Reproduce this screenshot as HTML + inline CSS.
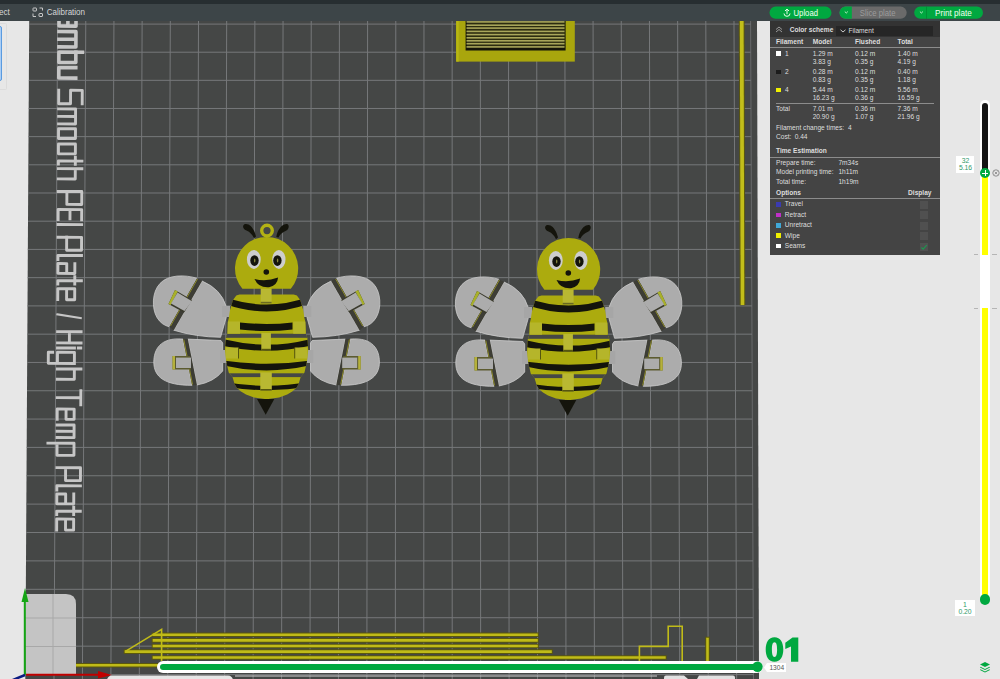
<!DOCTYPE html>
<html><head><meta charset="utf-8">
<style>
*{margin:0;padding:0;box-sizing:border-box}
html,body{width:1000px;height:679px;overflow:hidden;background:#e7e7e7;font-family:"Liberation Sans",sans-serif}
.abs{position:absolute}
#topstrip{left:0;top:0;width:1000px;height:4px;background:#272e31}
#topbar{left:0;top:4px;width:1000px;height:17px;background:#3d4548}
#leftpanel{left:0;top:21px;width:30px;height:658px;background:#e7e7e7}
svg.full{position:absolute;left:0;top:0;width:1000px;height:679px}
.tb{color:#d8d8d8;font-size:9px;top:6px;white-space:nowrap}
.btn{position:absolute;top:7px;height:12px;border-radius:6px;background:#00a840;color:#fff;font-size:8px;line-height:12px;text-align:center}
#legend{left:770px;top:21px;width:170px;height:234px;background:#444444;color:#dedede;font-size:6.6px}
#legend .hdr{position:absolute;left:0;top:0;width:170px;height:16px;background:#333333}
.lt{position:absolute;white-space:nowrap;line-height:8px}
.b{font-weight:bold}
</style></head><body>
<div id="topstrip" class="abs"></div>
<div id="topbar" class="abs"></div>
<svg class="abs" style="left:0;top:0" width="100" height="21" viewBox="0 0 100 21"><g fill="#d6d8d8" font-family="Liberation Sans" font-size="8.8">
<text x="-1" y="14.9" textLength="10.9" lengthAdjust="spacingAndGlyphs">ect</text>
<text x="46.8" y="14.9" textLength="38.2" lengthAdjust="spacingAndGlyphs">Calibration</text></g></svg>
<div id="leftpanel" class="abs"></div>
<svg class="full" viewBox="0 0 1000 679">
  <polygon points="29.2,21 757,21 759,679 25.3,679" fill="#454746"/>
  <g stroke="#76787a" stroke-width="1" fill="none">
  <line x1="57.58" y1="21" x2="53.98" y2="679"/>
<line x1="85.77" y1="21" x2="82.42" y2="679"/>
<line x1="113.95" y1="21" x2="110.87" y2="679"/>
<line x1="142.13" y1="21" x2="139.31" y2="679"/>
<line x1="170.32" y1="21" x2="167.76" y2="679"/>
<line x1="198.50" y1="21" x2="196.20" y2="679"/>
<line x1="226.68" y1="21" x2="224.65" y2="679"/>
<line x1="254.87" y1="21" x2="253.09" y2="679"/>
<line x1="283.05" y1="21" x2="281.54" y2="679"/>
<line x1="311.24" y1="21" x2="309.98" y2="679"/>
<line x1="339.42" y1="21" x2="338.43" y2="679"/>
<line x1="367.60" y1="21" x2="366.87" y2="679"/>
<line x1="395.79" y1="21" x2="395.32" y2="679"/>
<line x1="423.97" y1="21" x2="423.76" y2="679"/>
<line x1="452.15" y1="21" x2="452.21" y2="679"/>
<line x1="480.34" y1="21" x2="480.65" y2="679"/>
<line x1="508.52" y1="21" x2="509.10" y2="679"/>
<line x1="536.71" y1="21" x2="537.55" y2="679"/>
<line x1="564.89" y1="21" x2="565.99" y2="679"/>
<line x1="593.07" y1="21" x2="594.44" y2="679"/>
<line x1="621.26" y1="21" x2="622.88" y2="679"/>
<line x1="649.44" y1="21" x2="651.33" y2="679"/>
<line x1="677.63" y1="21" x2="679.77" y2="679"/>
<line x1="705.81" y1="21" x2="708.22" y2="679"/>
<line x1="733.99" y1="21" x2="736.66" y2="679"/>
<line x1="29.18" y1="24.10" x2="750.61" y2="24.10"/>
<line x1="29.02" y1="52.21" x2="750.74" y2="52.21"/>
<line x1="28.85" y1="80.33" x2="750.86" y2="80.33"/>
<line x1="28.68" y1="108.47" x2="750.99" y2="108.47"/>
<line x1="28.51" y1="136.63" x2="751.11" y2="136.63"/>
<line x1="28.35" y1="164.80" x2="751.23" y2="164.80"/>
<line x1="28.18" y1="192.99" x2="751.36" y2="192.99"/>
<line x1="28.01" y1="221.19" x2="751.48" y2="221.19"/>
<line x1="27.85" y1="249.41" x2="751.61" y2="249.41"/>
<line x1="27.68" y1="277.65" x2="751.73" y2="277.65"/>
<line x1="27.51" y1="305.90" x2="751.86" y2="305.90"/>
<line x1="27.34" y1="334.17" x2="751.98" y2="334.17"/>
<line x1="27.18" y1="362.45" x2="752.10" y2="362.45"/>
<line x1="27.01" y1="390.75" x2="752.23" y2="390.75"/>
<line x1="26.84" y1="419.07" x2="752.35" y2="419.07"/>
<line x1="26.67" y1="447.40" x2="752.48" y2="447.40"/>
<line x1="26.50" y1="475.75" x2="752.60" y2="475.75"/>
<line x1="26.34" y1="504.11" x2="752.73" y2="504.11"/>
<line x1="26.17" y1="532.49" x2="752.85" y2="532.49"/>
<line x1="26.00" y1="560.89" x2="752.98" y2="560.89"/>
<line x1="25.83" y1="589.30" x2="753.10" y2="589.30"/>
<line x1="25.66" y1="617.73" x2="753.23" y2="617.73"/>
<line x1="25.49" y1="646.17" x2="753.36" y2="646.17"/>
<line x1="25.33" y1="674.63" x2="753.48" y2="674.63"/>
<line x1="750.6" y1="21" x2="753.5" y2="679" stroke-opacity="0.7"/>
  </g>
</svg>
<svg class="full" viewBox="0 0 1000 679">
  <!-- plate text -->
  <defs><clipPath id="plateclip"><rect x="0" y="21" width="1000" height="658"/></clipPath></defs>
  <g clip-path="url(#plateclip)"><g transform="translate(57.8,0) rotate(90.27)" fill="none" stroke="#c6c6c6" stroke-linejoin="round" stroke-linecap="square">
<path d="M103.75,-24.90 L90.25,-24.90 L90.25,-13.20 L103.75,-13.20 L103.75,-1.35 L90.25,-1.35 M108.85,-1.35 L108.85,-18.30 L123.85,-18.30 L123.85,-1.35 M116.35,-18.30 L116.35,-1.35 M128.65,-1.35 L128.65,-18.30 L138.45,-18.30 L138.45,-1.35 L128.65,-1.35Z M143.95,-1.35 L143.95,-18.30 L153.75,-18.30 L153.75,-1.35 L143.95,-1.35Z M161.00,-24.90 L161.00,-1.35 L164.15,-1.35 M157.10,-18.30 L164.15,-18.30 M168.65,-24.90 L168.65,-1.35 M168.65,-18.30 L178.85,-18.30 L178.85,-1.35 M191.45,-1.35 L191.45,-24.90 L204.35,-24.90 L204.35,-10.00 L191.45,-10.00 M219.65,-24.90 L209.55,-24.90 L209.55,-1.35 L219.65,-1.35 M209.55,-13.20 L218.65,-13.20 M224.55,-24.90 L224.55,-1.35 M237.25,-1.35 L237.25,-24.90 L250.15,-24.90 L250.15,-10.00 L237.25,-10.00 M255.35,-24.90 L255.35,-1.35 L259.55,-1.35 M263.55,-18.30 L273.35,-18.30 L273.35,-1.35 L263.55,-1.35 L263.55,-10.20 L273.35,-10.20 M280.70,-24.90 L280.70,-1.35 L284.05,-1.35 M276.60,-18.30 L284.05,-18.30 M299.65,-1.35 L288.65,-1.35 L288.65,-18.30 L299.65,-18.30 L299.65,-10.20 L288.65,-10.20 M331.65,-24.90 L331.65,-1.35 M342.85,-24.90 L342.85,-1.35 M331.65,-13.20 L342.85,-13.20 M347.95,-18.30 L347.95,-1.35 M347.95,-22.20 L347.95,-24.60 M363.35,-18.30 L352.25,-18.30 L352.25,-1.35 L363.35,-1.35 M363.35,-18.30 L363.35,7.80 L352.25,7.80 L352.25,3.50 M368.95,-24.90 L368.95,-1.35 M368.95,-18.30 L379.25,-18.30 L379.25,-1.35 M390.60,-24.90 L404.70,-24.90 M397.65,-24.90 L397.65,-1.35 M419.25,-1.35 L409.05,-1.35 L409.05,-18.30 L419.25,-18.30 L419.25,-10.20 L409.05,-10.20 M424.95,-1.35 L424.95,-18.30 L437.55,-18.30 L437.55,-1.35 M431.25,-18.30 L431.25,-1.35 M443.15,7.80 L443.15,-18.30 L455.25,-18.30 L455.25,-1.35 L443.15,-1.35 M467.65,-1.35 L467.65,-24.90 L480.55,-24.90 L480.55,-10.00 L467.65,-10.00 M485.75,-24.90 L485.75,-1.35 L489.95,-1.35 M493.95,-18.30 L503.75,-18.30 L503.75,-1.35 L493.95,-1.35 L493.95,-10.20 L503.75,-10.20 M511.10,-24.90 L511.10,-1.35 L514.45,-1.35 M507.00,-18.30 L514.45,-18.30 M530.05,-1.35 L519.05,-1.35 L519.05,-18.30 L530.05,-18.30 L530.05,-10.20 L519.05,-10.20" stroke-width="2.9"/>
<path d="M14.35,-18.30 L26.05,-18.30 L26.05,-1.35 L14.35,-1.35 L14.35,-10.20 L26.05,-10.20 M31.55,-1.35 L31.55,-18.30 L46.85,-18.30 L46.85,-1.35 M39.20,-18.30 L39.20,-1.35 M52.05,-24.90 L52.05,-1.35 L62.45,-1.35 L62.45,-18.30 L52.05,-18.30 M67.55,-18.30 L67.55,-1.35 L78.05,-1.35 L78.05,-18.30" stroke-width="3.6"/>
<path d="M314.3,-1 L318,-24.5" stroke-width="2"/>
</g></g>
  <defs>
<clipPath id="bodyclip"><path d="M239.5,294.5 L236.3,295.5 L233.0,300.0 L230.0,310.0 L228.8,318.0 L227.8,322.0 L227.3,334.0 L225.8,338.0 L225.0,350.0 L226.0,360.0 L228.7,372.4 L232.5,377.1 L234.6,384.0 L237.0,388.0 L241.0,391.5 L246.0,394.5 L254.0,397.5 L266.6,399.2 L279.2,397.5 L287.2,394.5 L292.2,391.5 L296.2,388.0 L298.6,384.0 L300.7,377.1 L304.5,372.4 L307.2,360.0 L308.2,350.0 L307.4,338.0 L305.9,334.0 L305.4,322.0 L304.4,318.0 L303.2,310.0 L300.2,300.0 L296.9,295.5 L293.7,294.5 Z"/></clipPath>
<g id="wingL">
  <path stroke="#cbcbcb" stroke-width="0.8" d="M197,278.3 C185,274.5 168,274.5 160,283.5 C152,292 151.5,308 157,317.5 C160,322.5 164,325.5 169.3,326.8 Z" fill="#acacac"/>
  <path stroke="#cbcbcb" stroke-width="0.8" d="M202,281 Q221,289 226.2,306.4 L226.2,317.5 L220.6,337.3 Q196,337 173.7,330.2 Z" fill="#acacac"/>
  <path d="M197,278.3 L169.3,326.8 L173.7,330.2 L202,281 Z" fill="#3d3d35"/>
  <path d="M197.5,279 L170.5,326" stroke="#8c8a2a" stroke-width="1" fill="none"/>
  <path d="M175,290 L192,300 L184,312.5 L168.5,304 Z" fill="#3a3a2c"/>
  <path d="M175,290 L177.8,291.6 L170.6,305 L168.5,304 Z" fill="#a8b02a"/>
  <path d="M177.5,292.6 L192,301.2 L184.5,311 L171,303.5 Z" fill="#acacac"/>
  <path stroke="#cbcbcb" stroke-width="0.8" d="M183,339.1 C160,337 153.8,350 153.8,362 C153.8,377 165,385.5 192.1,385.3 Z" fill="#acacac"/>
  <path stroke="#cbcbcb" stroke-width="0.8" d="M187.8,339.1 L221,340.5 L222.7,343 L222.7,371 Q214,382 196.9,385 Z" fill="#acacac"/>
  <path d="M183,339.1 L192.1,385.3 L196.9,385 L187.8,339.1 Z" fill="#3d3d35"/>
  <path d="M183.8,339.5 L192.5,384.5" stroke="#8c8a2a" stroke-width="1" fill="none"/>
  <path d="M190,356 L172.5,356 L172.5,369.5 L191,369.5 Z" fill="#5c5b30"/><path d="M172.5,356 L175,356 L175,369.5 L172.5,369.5 Z" fill="#b5b13a"/>
  <path d="M191,357.6 L176,357.6 L176,368 L191,368 Z" fill="#acacac"/>
  <rect x="222" y="306" width="8" height="11" fill="#a6a6a6"/>
  <rect x="220" y="350" width="8" height="13" fill="#a6a6a6"/>
</g>
<g id="bee">
  <use href="#wingL"/>
  <use href="#wingL" transform="translate(533.2,0) scale(-1,1)"/>
  <!-- body -->
  <g clip-path="url(#bodyclip)">
    <rect x="220" y="290" width="95" height="112" fill="#acab0e"/>
    <path d="M225,297 Q266.6,312.2 308.2,297 L308.2,304.1 Q266.6,318.9 225,304.1 Z" fill="#14140c"/>
    <path d="M240,322.4 Q266.6,325.4 292.5,322.4 L292.5,329.5 Q266.6,332.5 240,329.5 Z" fill="#14140c"/>
    <path d="M220,338.3 Q266.6,350.9 313.2,338.3 L313.2,345.1 Q266.6,356.4 220,345.1 Z" fill="#14140c"/>
    <path d="M220,360 Q266.6,367.4 313.2,360 L313.2,364.6 Q266.6,376.2 220,364.6 Z" fill="#14140c"/>
    <path d="M220,380.9 Q266.6,390.7 313.2,380.9 L313.2,385.5 Q266.6,394.8 220,385.5 Z" fill="#14140c"/>
    <rect x="220" y="333.7" width="95" height="4.1" fill="#454746"/>
    <rect x="220" y="373.3" width="95" height="3.8" fill="#454746"/>
    <rect x="261.3" y="333" width="9.6" height="17.3" fill="#b9b832"/>
    <rect x="261.3" y="348.8" width="9.6" height="1.5" fill="#55550e"/>
    <rect x="260.3" y="372.4" width="11.5" height="18.2" fill="#b9b832"/>
    <rect x="260.3" y="389" width="11.5" height="1.6" fill="#55550e"/>
    <rect x="227.5" y="321.5" width="12.5" height="12.2" fill="#b5b52a"/>
    <rect x="293.2" y="321.5" width="12.5" height="12.2" fill="#b5b52a"/>
    <rect x="225.8" y="347.5" width="12.5" height="11" fill="#b5b52a"/>
    <rect x="294.9" y="347.5" width="12.5" height="11" fill="#b5b52a"/>
    <rect x="238" y="347.5" width="1" height="11" fill="#55550e"/>
    <rect x="294.2" y="347.5" width="1" height="11" fill="#55550e"/>
  </g>
  <path d="M257,399 L274.3,399 L265.7,414.8 Z" fill="#14140c"/>
  <!-- neck -->
  <rect x="260.7" y="286" width="10.9" height="17.4" fill="#b9b832"/><rect x="260.7" y="301.8" width="10.9" height="1.6" fill="#6a6a20"/>
  <!-- head -->
  <path d="M242.4,288.8 A31.6 31.6 0 1 1 290.8,288.8 Z" fill="#acab0e"/>
  <path d="M243.1,226.1 C243.5,223.5 246.5,223.6 248.5,224.5 C251.5,226 254.5,230 256,236.5 L254,238.3 C252.5,235 250,232 246.5,230.6 C244,229.6 242.8,228 243.1,226.1 Z" fill="#14140c"/>
  <path d="M288.7,226.1 C288.5,223.5 286,223.5 284,224.5 C281,226 277.5,230 276.3,237 L278.5,237.5 C280,234.5 282.5,232 286,230.8 C288,230 288.8,228 288.7,226.1 Z" fill="#14140c"/>
  <ellipse cx="253.8" cy="259.4" rx="6.9" ry="9.5" fill="#cdcdcd"/>
  <ellipse cx="278.9" cy="259.4" rx="6.6" ry="9.5" fill="#cdcdcd"/>
  <ellipse cx="254.5" cy="260.6" rx="4.2" ry="5.3" fill="#14140c"/><ellipse cx="254.7" cy="260.6" rx="0.7" ry="2" fill="#8a8a40"/>
  <ellipse cx="277.4" cy="260.6" rx="4.2" ry="5.3" fill="#14140c"/><ellipse cx="277.6" cy="260.6" rx="0.7" ry="2" fill="#8a8a40"/>
  <circle cx="266.3" cy="272" r="2.8" fill="#14140c"/>
  <path d="M254.5,278.9 Q266,282 278.1,277.5 Q277.5,285.5 269,287.2 Q258.5,288 254.5,278.9 Z" fill="#14140c"/>
</g>
</defs>

  <use href="#bee"/>
  <circle cx="267" cy="230.6" r="5.3" stroke="#b3b214" stroke-width="3.4" fill="none"/>
  <use href="#bee" transform="translate(302,1)"/>
  <!-- top object -->
  <rect x="456.2" y="21" width="118.6" height="40.6" fill="#a9a60d"/><rect x="456.2" y="21" width="2.5" height="40.6" fill="#b8b712"/>
  <rect x="465.6" y="21" width="100" height="29.5" fill="#15150a"/><rect x="467" y="21" width="98" height="26.5" fill="#2c2c10"/>
  <rect x="466.5" y="21.1" width="98" height="1.6" fill="#a8a65a"/>
<rect x="466.5" y="24.4" width="98" height="1.6" fill="#a8a65a"/>
<rect x="466.5" y="27.3" width="98" height="1.6" fill="#a8a65a"/>
<rect x="466.5" y="30.6" width="98" height="1.6" fill="#a8a65a"/>
<rect x="466.5" y="33.8" width="98" height="1.6" fill="#a8a65a"/>
<rect x="466.5" y="37.0" width="98" height="1.6" fill="#a8a65a"/>
<rect x="466.5" y="40.0" width="98" height="1.6" fill="#a8a65a"/>
<rect x="466.5" y="42.9" width="98" height="1.6" fill="#a8a65a"/>
<rect x="466.5" y="46.1" width="98" height="1.6" fill="#a8a65a"/>
  <!-- right yellow line -->
  <polygon points="738.8,21 744.6,21 745.3,305.3 739.7,305.3" fill="#5a570e"/><polygon points="739.8,21 743.6,21 744.3,305 740.7,305" fill="#c2be1a"/>
  <!-- bottom lines -->
  <g stroke="#5a570e" stroke-width="4.6" fill="none" stroke-linecap="square">
    <line x1="154" y1="634.8" x2="536.5" y2="634.8"/>
    <line x1="154" y1="640.4" x2="536.5" y2="640.4"/>
    <line x1="154" y1="646" x2="536.5" y2="646"/>
    <line x1="126" y1="651.6" x2="550.5" y2="651.6"/>
    <line x1="154" y1="657.5" x2="664.4" y2="657.5"/>
    <line x1="77" y1="665.2" x2="160" y2="665.2"/>
    <line x1="707.5" y1="639" x2="707.5" y2="661"/>
  </g>
  <g stroke="#c0bb18" stroke-width="2.6" fill="none" stroke-linecap="square">
    <line x1="154" y1="634.8" x2="536.5" y2="634.8"/>
    <line x1="154" y1="640.4" x2="536.5" y2="640.4"/>
    <line x1="154" y1="646" x2="536.5" y2="646"/>
    <line x1="126" y1="651.6" x2="550.5" y2="651.6"/>
    <line x1="154" y1="657.5" x2="664.4" y2="657.5"/>
    <line x1="77" y1="665.2" x2="160" y2="665.2"/>
    <line x1="707.5" y1="639" x2="707.5" y2="661"/>
  </g>
  <g stroke="#c0bb18" stroke-width="1.6" fill="none">
    <polyline points="125,651.6 161.6,629.4 161.6,661"/>
    <polyline points="639.4,661 639.4,646.4 668.2,646.4 668.2,626.2 682.2,626.2 682.2,661"/>
  </g>
  <!-- cube -->
  <path d="M26,594 L66,594 Q76,594 76,604 L76,675 L26,675 Z" fill="#c4c4c4"/>
  <g stroke="#a8a8a8" stroke-width="1"><line x1="53" y1="594" x2="53" y2="675"/><line x1="26" y1="618" x2="76" y2="618"/><line x1="26" y1="646.5" x2="76" y2="646.5"/></g>
  <!-- axes -->
  <line x1="24.8" y1="675" x2="24.8" y2="598" stroke="#14a614" stroke-width="2"/>
  <polygon points="21.5,602 28.5,602 25,588" fill="#14a614"/>
  <line x1="26" y1="674.8" x2="100" y2="674.8" stroke="#c00000" stroke-width="2"/>
  <polygon points="98,671 98,678.5 112,675" fill="#c00000"/>
  <line x1="25" y1="675" x2="8" y2="682" stroke="#0b1a80" stroke-width="2.5"/>
  <!-- bottom light bar -->
  <rect x="107" y="675.5" width="126" height="10" rx="5" fill="#e6e6e6"/>
  <line x1="235" y1="676" x2="657" y2="676" stroke="#cfcfcf" stroke-width="1"/>
  <path d="M664,679 L664,677.5 Q664,675.5 666,675.5 L684,675.5 L688,679 Z" fill="#e2e2e2"/>
  <path d="M697,679 L699,675.5 L733,675.5 Q735,675.5 735,677.5 L735,679 Z" fill="#e2e2e2"/>
  <!-- horizontal slider -->
  <rect x="157" y="661" width="606" height="12" rx="6" fill="#ffffff"/>
  <rect x="160" y="664" width="598" height="6" rx="3" fill="#00a840"/>
  <circle cx="757.5" cy="666.8" r="5.2" fill="#00a840"/>
  <path fill-rule="evenodd" d="M774.5,637.2 C780.5,637.2 783.3,642.5 783.3,649.5 C783.3,656.5 780.5,661.8 774.5,661.8 C768.5,661.8 765.7,656.5 765.7,649.5 C765.7,642.5 768.5,637.2 774.5,637.2 Z M774.5,642.2 C772.6,642.2 771.9,645 771.9,649.5 C771.9,654 772.6,656.9 774.5,656.9 C776.4,656.9 777.1,654 777.1,649.5 C777.1,645 776.4,642.2 774.5,642.2 Z" fill="#00a840"/>
  <path d="M798.3,637.5 L798.3,661.8 L791,661.8 L791,646.5 L785.3,649 L785.3,642.8 L792.5,637.5 Z" fill="#00a840"/>
</svg>
<!-- top buttons -->
<svg class="abs" style="left:760px;top:0" width="240" height="21" viewBox="760 0 240 21">
 <rect x="769.5" y="6.6" width="62" height="12.2" rx="6.1" fill="#00a840"/>
 <g stroke="#e8ffe8" stroke-width="1" fill="none"><path d="M787,9.2 L787,14.2 M785,11 L787,9 L789,11 M784,13.5 Q784,16.3 787,16.3 Q790,16.3 790,13.5"/></g>
 <text x="793.5" y="15.9" fill="#f2fff2" font-family="Liberation Sans" font-size="8.6" textLength="24.5" lengthAdjust="spacingAndGlyphs">Upload</text>
 <rect x="839.5" y="6.6" width="67.2" height="12.2" rx="6.1" fill="#6a6a6a"/>
 <path d="M851.8,6.6 L845.6,6.6 A6.1 6.1 0 0 0 845.6,18.8 L851.8,18.8 Z" fill="#00a840"/>
 <path d="M844.8,11.6 L846.3,13 L847.8,11.6" stroke="#e8ffe8" stroke-width="0.8" fill="none"/>
 <text x="859.8" y="15.9" fill="#9c9c9c" font-family="Liberation Sans" font-size="8.6" textLength="35.7" lengthAdjust="spacingAndGlyphs">Slice plate</text>
 <rect x="914.2" y="6.6" width="68.8" height="12.2" rx="6.1" fill="#00a840"/>
 <line x1="926.5" y1="6.6" x2="926.5" y2="18.8" stroke="#008a34" stroke-width="0.8"/>
 <path d="M919.9,11.6 L921.4,13 L922.9,11.6" stroke="#e8ffe8" stroke-width="0.8" fill="none"/>
 <text x="935" y="15.9" fill="#f2fff2" font-family="Liberation Sans" font-size="8.6" textLength="36.8" lengthAdjust="spacingAndGlyphs">Print plate</text>
</svg>
<!-- legend -->
<div id="legend" class="abs">
<div class="hdr"></div>
<svg class="abs" style="left:5px;top:5px" width="8" height="7" viewBox="0 0 8 7"><path d="M1,6 L4,3.5 L7,6 M1,3.5 L4,1 L7,3.5" stroke="#9a9a9a" stroke-width="1" fill="none"/></svg>
<div class="lt b" style="left:19.7px;top:4.6px;">Color scheme</div>
<div class="abs" style="left:66px;top:5px;width:96.7px;height:9.5px;background:#262626"></div>
<svg class="abs" style="left:70px;top:8px" width="6" height="4" viewBox="0 0 6 4"><path d="M0.5,0.8 L3,3 L5.5,0.8" stroke="#dddddd" stroke-width="0.9" fill="none"/></svg>
<div class="lt " style="left:78.5px;top:5.5px;">Filament</div>
<div class="lt b" style="left:6px;top:17.2px;">Filament</div>
<div class="lt b" style="left:42.7px;top:17.2px;">Model</div>
<div class="lt b" style="left:85px;top:17.2px;">Flushed</div>
<div class="lt b" style="left:127.6px;top:17.2px;">Total</div>
<div class="abs" style="left:0;top:26px;width:170px;height:1px;background:#8c8c8c"></div>
<div class="abs" style="left:6.3px;top:30.4px;width:4.5px;height:4.5px;background:#ffffff"></div>
<div class="lt " style="left:15px;top:28.9px;">1</div>
<div class="lt " style="left:42.7px;top:28.9px;">1.29 m</div>
<div class="lt " style="left:42.7px;top:36.7px;">3.83 g</div>
<div class="lt " style="left:85px;top:28.9px;">0.12 m</div>
<div class="lt " style="left:85px;top:36.7px;">0.35 g</div>
<div class="lt " style="left:127.6px;top:28.9px;">1.40 m</div>
<div class="lt " style="left:127.6px;top:36.7px;">4.19 g</div>
<div class="abs" style="left:6.3px;top:48.6px;width:4.5px;height:4.5px;background:#1c1c1c"></div>
<div class="lt " style="left:15px;top:47.1px;">2</div>
<div class="lt " style="left:42.7px;top:47.1px;">0.28 m</div>
<div class="lt " style="left:42.7px;top:54.9px;">0.83 g</div>
<div class="lt " style="left:85px;top:47.1px;">0.12 m</div>
<div class="lt " style="left:85px;top:54.9px;">0.35 g</div>
<div class="lt " style="left:127.6px;top:47.1px;">0.40 m</div>
<div class="lt " style="left:127.6px;top:54.9px;">1.18 g</div>
<div class="abs" style="left:6.3px;top:66.8px;width:4.5px;height:4.5px;background:#f0f000"></div>
<div class="lt " style="left:15px;top:65.3px;">4</div>
<div class="lt " style="left:42.7px;top:65.3px;">5.44 m</div>
<div class="lt " style="left:42.7px;top:73.1px;">16.23 g</div>
<div class="lt " style="left:85px;top:65.3px;">0.12 m</div>
<div class="lt " style="left:85px;top:73.1px;">0.36 g</div>
<div class="lt " style="left:127.6px;top:65.3px;">5.56 m</div>
<div class="lt " style="left:127.6px;top:73.1px;">16.59 g</div>
<div class="abs" style="left:6px;top:81.8px;width:158px;height:1px;background:#8c8c8c"></div>
<div class="lt " style="left:6px;top:84.2px;">Total</div>
<div class="lt " style="left:42.7px;top:84.2px;">7.01 m</div>
<div class="lt " style="left:42.7px;top:91.8px;">20.90 g</div>
<div class="lt " style="left:85px;top:84.2px;">0.36 m</div>
<div class="lt " style="left:85px;top:91.8px;">1.07 g</div>
<div class="lt " style="left:127.6px;top:84.2px;">7.36 m</div>
<div class="lt " style="left:127.6px;top:91.8px;">21.96 g</div>
<div class="lt " style="left:6px;top:102.8px;">Filament change times:</div>
<div class="lt " style="left:78px;top:102.8px;">4</div>
<div class="lt " style="left:6px;top:111.8px;">Cost:</div>
<div class="lt " style="left:24.7px;top:111.8px;">0.44</div>
<div class="lt b" style="left:6px;top:126.4px;">Time Estimation</div>
<div class="abs" style="left:0;top:135.8px;width:170px;height:1px;background:#8c8c8c"></div>
<div class="lt " style="left:6px;top:137.5px;">Prepare time:</div>
<div class="lt " style="left:68.4px;top:137.5px;">7m34s</div>
<div class="lt " style="left:6px;top:147.1px;">Model printing time:</div>
<div class="lt " style="left:68.4px;top:147.1px;">1h11m</div>
<div class="lt " style="left:6px;top:156.6px;">Total time:</div>
<div class="lt " style="left:68.4px;top:156.6px;">1h19m</div>
<div class="lt b" style="left:6px;top:168.2px;">Options</div>
<div class="lt b" style="left:130px;top:168.2px;width:31.5px;text-align:right">Display</div>
<div class="abs" style="left:0;top:177.3px;width:170px;height:1px;background:#8c8c8c"></div>
<div class="abs" style="left:6.3px;top:181.1px;width:4.5px;height:4.5px;background:#3b3bb0"></div>
<div class="lt " style="left:14.8px;top:179.4px;">Travel</div>
<div class="abs" style="left:150px;top:179.7px;width:8px;height:8px;background:#505050"></div>
<div class="abs" style="left:6.3px;top:191.5px;width:4.5px;height:4.5px;background:#c030c8"></div>
<div class="lt " style="left:14.8px;top:189.8px;">Retract</div>
<div class="abs" style="left:150px;top:190.2px;width:8px;height:8px;background:#505050"></div>
<div class="abs" style="left:6.3px;top:202.0px;width:4.5px;height:4.5px;background:#40a8d8"></div>
<div class="lt " style="left:14.8px;top:200.3px;">Unretract</div>
<div class="abs" style="left:150px;top:200.6px;width:8px;height:8px;background:#505050"></div>
<div class="abs" style="left:6.3px;top:212.4px;width:4.5px;height:4.5px;background:#f0f000"></div>
<div class="lt " style="left:14.8px;top:210.8px;">Wipe</div>
<div class="abs" style="left:150px;top:211.1px;width:8px;height:8px;background:#505050"></div>
<div class="abs" style="left:6.3px;top:222.9px;width:4.5px;height:4.5px;background:#ffffff"></div>
<div class="lt " style="left:14.8px;top:221.2px;">Seams</div>
<div class="abs" style="left:150px;top:221.5px;width:8px;height:8px;background:#505050"></div>
<svg class="abs" style="left:150px;top:221.5px" width="8" height="8" viewBox="0 0 8 8"><path d="M1.5,4.5 L3.2,6.2 L6.8,2" stroke="#1a9a50" stroke-width="1.1" fill="none"/></svg>
</div>
<!-- right slider -->
<div class="abs" style="left:979.5px;top:100px;width:10px;height:500px;background:#fff;border-radius:5px"></div>
<div class="abs" style="left:982px;top:103px;width:6px;height:70px;background:#151515;border-radius:3px 3px 0 0"></div>
<div class="abs" style="left:982px;top:173px;width:6px;height:82px;background:#ffff00"></div>
<div class="abs" style="left:982px;top:308px;width:6px;height:290px;background:#ffff00"></div>
<div class="abs" style="left:979.8px;top:168px;width:10.4px;height:10.4px;border-radius:50%;background:#00a840"></div>
<div class="abs" style="left:979.6px;top:594px;width:10.6px;height:10.6px;border-radius:50%;background:#00a840"></div>
<div class="abs" style="left:956px;top:156px;width:18px;height:16.6px;background:#fff"></div><svg class="abs" style="left:956px;top:156px" width="18" height="17" viewBox="0 0 18 17"><g fill="#2f9a6a" font-family="Liberation Sans" font-size="6.8" text-anchor="middle"><text x="9.5" y="7">32</text><text x="9.5" y="14.3">5.16</text></g></svg>
<div class="abs" style="left:955px;top:599.7px;width:19.5px;height:16.8px;background:#fff"></div><svg class="abs" style="left:955px;top:599.7px" width="20" height="17" viewBox="0 0 20 17"><g fill="#2f9a6a" font-family="Liberation Sans" font-size="6.8" text-anchor="middle"><text x="10" y="7">1</text><text x="10" y="14.3">0.20</text></g></svg>
<svg class="abs" style="left:763px;top:662px" width="25" height="11" viewBox="0 0 25 11"><path d="M4,1 L23,1 L23,10 L4,10 L1,5.5 Z" fill="#fff"/><text x="13.8" y="8" fill="#555" font-family="Liberation Sans" font-size="6.6" text-anchor="middle">1304</text></svg>
<!-- left panel item -->
<div class="abs" style="left:-3px;top:25.5px;width:5px;height:55px;background:#a9cdf5;border:1px solid #5a9be0;border-radius:2px"></div>
<div class="abs" style="left:0px;top:23px;width:7px;height:67px;border:1px solid #dcdcdc;border-left:none;border-radius:0 2px 2px 0"></div>
<!-- calibration icon -->
<svg class="abs" style="left:32px;top:7px" width="12" height="11" viewBox="0 0 12 11">
 <g fill="none" stroke="#c8c8c8" stroke-width="1">
  <rect x="1" y="1" width="3.5" height="3" rx="0.5"/>
  <rect x="7" y="6.5" width="3.5" height="3" rx="0.5"/>
  <path d="M7.5,1 L10.5,1 L10.5,3.5 M1,6.5 L1,9.5 L4,9.5"/>
 </g>
</svg>
<!-- close icon near slider -->
<svg class="abs" style="left:992px;top:169px" width="8" height="8" viewBox="0 0 8 8"><circle cx="4" cy="4" r="3.2" stroke="#858585" stroke-width="0.9" fill="none"/><path d="M2.6,2.6 L5.4,5.4 M5.4,2.6 L2.6,5.4" stroke="#858585" stroke-width="0.8"/></svg>
<!-- slider ticks -->
<div class="abs" style="left:973.5px;top:254px;width:4.5px;height:1px;background:#b5b5b5"></div>
<div class="abs" style="left:992px;top:254px;width:4.5px;height:1px;background:#b5b5b5"></div>
<div class="abs" style="left:973.5px;top:308px;width:4.5px;height:1px;background:#b5b5b5"></div>
<div class="abs" style="left:992px;top:308px;width:4.5px;height:1px;background:#b5b5b5"></div>
<!-- plus in slider handle -->
<div class="abs" style="left:982px;top:172.5px;width:6px;height:1px;background:#fff"></div>
<div class="abs" style="left:984.5px;top:170px;width:1px;height:6px;background:#fff"></div>
<!-- layers icon -->
<svg class="abs" style="left:979px;top:661px" width="12" height="12" viewBox="0 0 12 12">
 <path d="M6,1 L11,3.5 L6,6 L1,3.5 Z" fill="#00a840"/>
 <path d="M1.5,5.8 L6,8 L10.5,5.8 L11,6.5 L6,9 L1,6.5 Z" fill="#00a840"/>
 <path d="M1.5,8.3 L6,10.5 L10.5,8.3 L11,9 L6,11.5 L1,9 Z" fill="#00a840"/>
</svg>

</body></html>
